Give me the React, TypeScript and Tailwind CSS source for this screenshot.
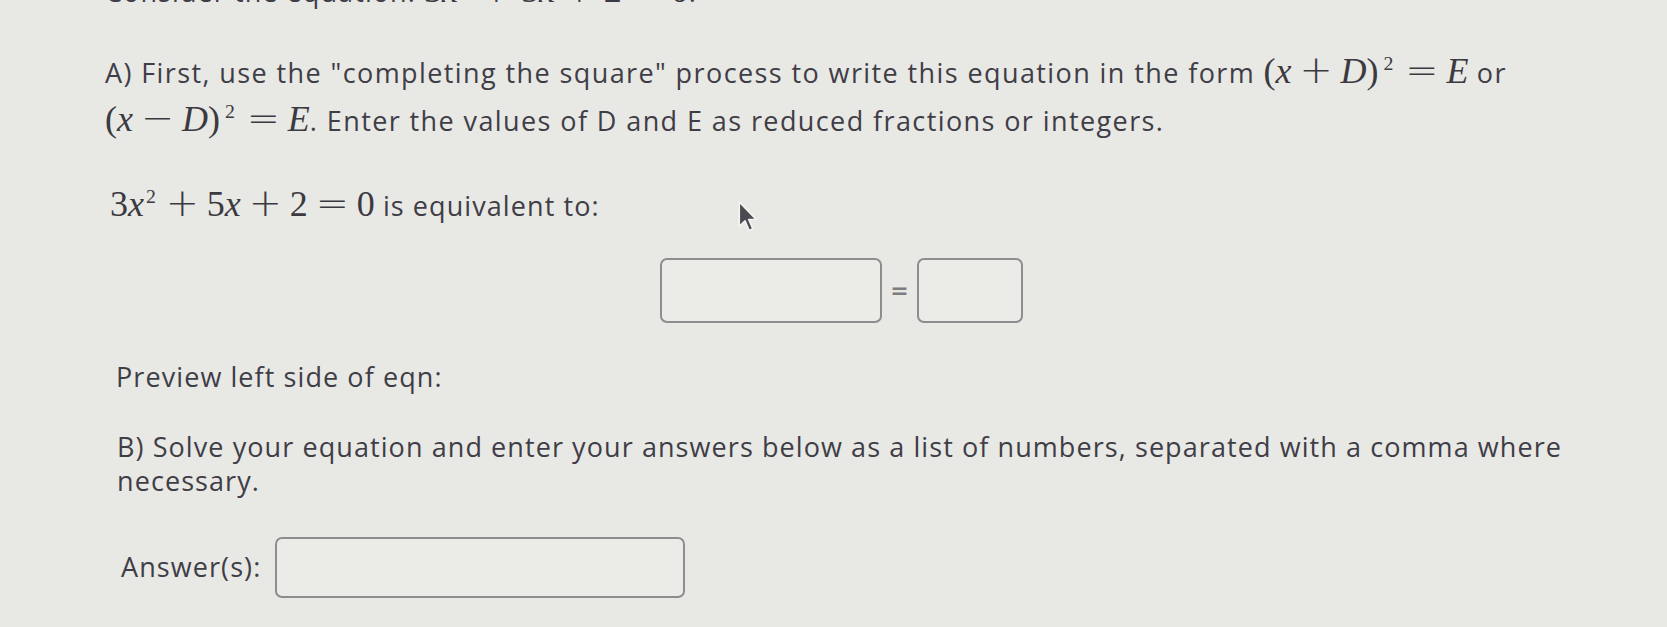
import type { ReactNode } from 'react';

function MathSpan({ children }: { children: ReactNode }) {
  return (
    <span className="font-['Liberation_Serif','DejaVu_Serif',serif] text-[36px] leading-[0] font-normal tracking-normal text-[#3b3a40]">
      {children}
    </span>
  );
}

function V({ children }: { children: ReactNode }) {
  return <i className="italic">{children}</i>;
}

function Op({ children }: { children: ReactNode }) {
  return (
    <span className="mx-[0.2em] font-['DejaVu_Sans',sans-serif] text-[1.1em] leading-[0] font-light">
      {children}
    </span>
  );
}

function Sq({ tight = false }: { tight?: boolean }) {
  return (
    <sup className={tight ? 'top-[-0.65em] ml-[2px] mr-[2px] text-[0.55em]' : 'top-[-0.65em] ml-[5px] mr-[4px] text-[0.55em]'}>
      2
    </sup>
  );
}

function Quadratic() {
  return (
    <MathSpan>
      3<V>x</V>
      <Sq tight />
      <Op>+</Op>5<V>x</V>
      <Op>+</Op>2<Op>=</Op>0
    </MathSpan>
  );
}

function InputBox({ className }: { className: string }) {
  return <div className={`rounded-[7px] border-2 border-[#8d8d8f] bg-[#ebebe8] ${className}`} />;
}

function Cursor() {
  return (
    <svg
      className="absolute left-[737px] top-[201px] h-[33px] w-[21px] blur-[0.5px]"
      viewBox="0 0 20 32"
      fill="none"
    >
      <path
        d="M2 1 L2 24.5 L7.6 19.3 L11.6 28.6 L15.2 27 L11.2 17.9 L18.4 17.9 Z"
        fill="#4b4a50"
        stroke="#f4f4f2"
        strokeWidth="1.6"
        strokeLinejoin="round"
      />
    </svg>
  );
}

export default function App() {
  return (
    <div className="relative h-[627px] w-full overflow-hidden bg-[#e8e8e5] font-['Open_Sans','Noto_Sans',sans-serif] text-[27px] font-medium tracking-[0.04em] text-[#3f3d46]">
      <div className="flex flex-col">
        <p className="ml-[105px] -mt-[25px] whitespace-nowrap leading-[34px]">
          Consider the equation: <Quadratic />.
        </p>

        <p className="ml-[105px] mt-[40px] whitespace-nowrap leading-[48px] tracking-[0.052em]">
          A) First, use the "completing the square" process to write this equation in the form{' '}
          <MathSpan>
            (<V>x</V>
            <Op>+</Op>
            <V>D</V>)<Sq />
            <Op>=</Op>
            <V>E</V>
          </MathSpan>{' '}
          or
          <br />
          <MathSpan>
            (<V>x</V>
            <Op>−</Op>
            <V>D</V>)<Sq />
            <Op>=</Op>
            <V>E</V>
          </MathSpan>
          . Enter the values of D and E as reduced fractions or integers.
        </p>

        <p className="ml-[110px] mt-[37px] whitespace-nowrap leading-[48px]">
          <Quadratic /> is equivalent to:
        </p>

        <div className="ml-[660px] mt-[28px] flex items-center">
          <InputBox className="h-[65px] w-[222px]" />
          <span className="w-[35px] text-center font-['DejaVu_Sans',sans-serif] text-[22px] font-bold tracking-normal text-[#7d7c82]">
            =
          </span>
          <InputBox className="h-[65px] w-[106px]" />
        </div>

        <p className="ml-[116px] mt-[37px] leading-[34px]">Preview left side of eqn:</p>

        <p className="ml-[117px] mt-[36px] whitespace-nowrap leading-[34px]">
          B) Solve your equation and enter your answers below as a list of numbers, separated with a comma where
          <br />
          necessary.
        </p>

        <div className="ml-[121px] mt-[39px] flex items-center">
          <span className="w-[154px]">Answer(s):</span>
          <InputBox className="h-[61px] w-[410px]" />
        </div>
      </div>

      <Cursor />
    </div>
  );
}
